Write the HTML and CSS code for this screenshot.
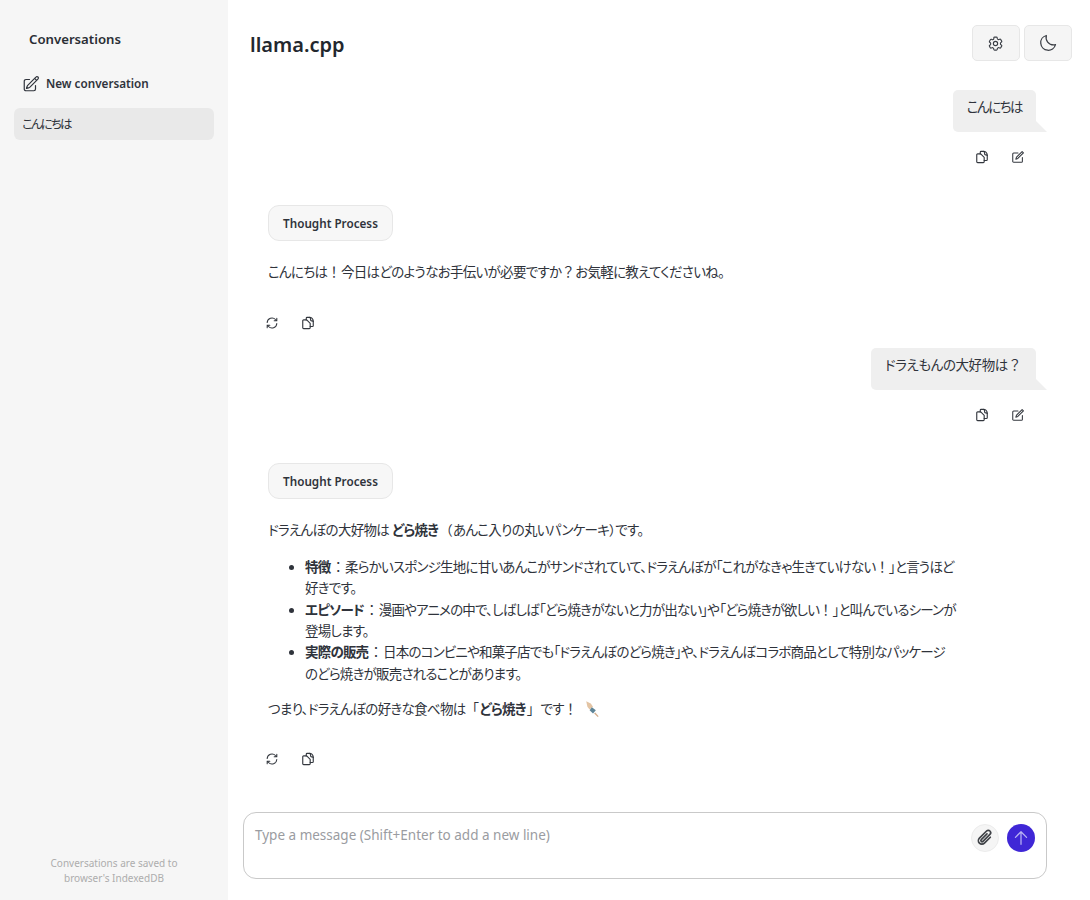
FILE: index.html
```html
<!DOCTYPE html>
<html lang="ja">
<head>
<meta charset="utf-8">
<title>llama.cpp</title>
<link rel="stylesheet" href="styles.css">
</head>
<body>
<div class="app">
  <aside class="sidebar">
    <h2 class="side-title">Conversations</h2>
    <div class="new-conv">
      <svg class="ico-new" viewBox="0 0 24 24" fill="none" stroke="currentColor" stroke-width="1.6" stroke-linecap="round" stroke-linejoin="round"><path d="M16.86 4.49l1.69-1.69a1.88 1.88 0 1 1 2.65 2.65L10.58 16.08a4.5 4.5 0 0 1-1.9 1.13L6 18l.8-2.68a4.5 4.5 0 0 1 1.13-1.9L16.86 4.49zm0 0L19.5 7.13M18 14v4.75A2.25 2.25 0 0 1 15.75 21H5.25A2.25 2.25 0 0 1 3 18.75V8.25A2.25 2.25 0 0 1 5.25 6H10"/></svg>
      <span>New conversation</span>
    </div>
    <div class="conv-item">こんにちは</div>
    <div class="side-note">Conversations are saved to<br>browser's IndexedDB</div>
  </aside>
  <main class="main">
    <header class="topbar">
      <h1 class="brand">llama.cpp</h1>
      <div class="top-btns">
        <button class="top-btn"><svg class="ico-top" viewBox="0 0 24 24" fill="none" stroke="currentColor" stroke-width="1.6" stroke-linecap="round" stroke-linejoin="round"><path d="M9.6 3.9c.1-.5.5-.9 1.100-.9h2.600c.5 0 1 .4 1.100.9l.2 1.300c.1.400.4.700.7.900l.4.200c.3.200.7.200 1.100.1l1.200-.5c.5-.2 1.100 0 1.400.5l1.300 2.200c.3.500.2 1.100-.3 1.400l-1 .8c-.3.300-.5.700-.4 1.100v.5c0 .4.100.8.400 1.100l1 .8c.5.300.6.900.3 1.400l-1.300 2.200c-.3.500-.9.700-1.400.5l-1.200-.5c-.4-.1-.8-.1-1.100.1l-.4.200c-.3.200-.6.500-.7.900l-.2 1.300c-.1.500-.6.900-1.100.9h-2.600c-.6 0-1-.4-1.100-.9l-.2-1.300c-.1-.4-.4-.7-.7-.9l-.4-.2c-.3-.2-.7-.2-1.100-.1l-1.200.5c-.5.200-1.100 0-1.400-.5L3.500 15.900c-.3-.5-.2-1.100.3-1.400l1-.8c.3-.3.500-.7.400-1.100v-.5c0-.4-.1-.8-.4-1.100l-1-.8c-.5-.3-.6-.9-.3-1.400l1.300-2.200c.3-.5.900-.7 1.400-.5l1.200.5c.4.100.8.100 1.100-.1l.4-.2c.3-.2.600-.5.700-.9z"/><circle cx="12" cy="12" r="3"/></svg></button>
        <button class="top-btn"><svg class="ico-moon" viewBox="0 0 24 24" fill="none" stroke="currentColor" stroke-width="1.5" stroke-linecap="round" stroke-linejoin="round"><path d="M10 3a9 9 0 1 0 11 11 8.500 8.500 0 0 1-2.200.300A9 9 0 0 1 10 3z"/></svg></button>
      </div>
    </header>
    <section class="chat">
      <div class="user-msg">
        <div class="bubble kana">こんにちは</div>
        <div class="actions user-actions">
          <svg class="ico" viewBox="0 0 16 16"><use href="#copy"/></svg>
          <svg class="ico" viewBox="0 0 16 16"><use href="#edit"/></svg>
        </div>
      </div>
      <div class="bot-msg">
        <div class="thought">Thought Process</div>
        <p class="para">こんにちは<span class="fw">！</span>今日はどのようなお手伝いが必要ですか<span class="fw">？</span>お気軽に教えてくださいね。</p>
        <div class="actions bot-actions">
          <svg class="ico" viewBox="0 0 16 16"><use href="#regen"/></svg>
          <svg class="ico" viewBox="0 0 16 16"><use href="#copy"/></svg>
        </div>
      </div>
      <div class="user-msg">
        <div class="bubble">ドラえもんの大好物は<span class="fw">？</span></div>
        <div class="actions user-actions">
          <svg class="ico" viewBox="0 0 16 16"><use href="#copy"/></svg>
          <svg class="ico" viewBox="0 0 16 16"><use href="#edit"/></svg>
        </div>
      </div>
      <div class="bot-msg">
        <div class="thought">Thought Process</div>
        <p class="para">ドラえんぼの大好物は <b>どら焼き</b><span class="fw">（</span>あんこ入りの丸いパンケーキ）です。</p>
        <ul class="list">
          <li><b>特徴</b><span class="fw">：</span>柔らかいスポンジ生地に甘いあんこがサンドされていて、ドラえんぼが「これがなきゃ生きていけない<span class="fw">！</span>」と言うほど好きです。</li>
          <li><b>エピソード</b><span class="fw">：</span>漫画やアニメの中で、しばしば「どら焼きがないと力が出ない」や「どら焼きが欲しい<span class="fw">！</span>」と叫んでいるシーンが登場します。</li>
          <li><b>実際の販売</b><span class="fw">：</span>日本のコンビニや和菓子店でも「ドラえんぼのどら焼き」や、ドラえんぼコラボ商品として特別なパッケージ<span class="nb">のどら焼き</span>が販売されることがあります。</li>
        </ul>
        <p class="para last">つまり、ドラえんぼの好きな食べ物は<span class="fw">「</span><b>どら焼き</b><span class="fw">」</span>です<span class="fw">！</span>
          <svg class="emoji" viewBox="0 0 16 16"><path d="M2 1l4 2 2 3-3 2.500-2-2.500z" fill="#e3c4a4"/><path d="M7 6.500l3.500 2.500-2.500 3-3-3z" fill="#5d8497"/><path d="M10 11l3 3.500-.8.600-3.200-3z" fill="#d2ac8c"/></svg>
        </p>
        <div class="actions bot-actions">
          <svg class="ico" viewBox="0 0 16 16"><use href="#regen"/></svg>
          <svg class="ico" viewBox="0 0 16 16"><use href="#copy"/></svg>
        </div>
      </div>
    </section>
    <div class="composer">
      <span class="placeholder">Type a message (Shift+Enter to add a new line)</span>
      <div class="composer-btns">
        <button class="clip"><svg viewBox="0 0 24 24" fill="none" stroke="currentColor" stroke-width="2" stroke-linecap="round" stroke-linejoin="round"><path d="M18.400 11.100l-7.100 7.100a4.200 4.200 0 0 1-6-6l8.600-8.600a2.800 2.800 0 0 1 4 4l-8.400 8.400a1.400 1.400 0 0 1-2-2l6.900-6.900"/></svg></button>
        <button class="send"><svg viewBox="0 0 24 24" fill="none" stroke="currentColor" stroke-width="1.500" stroke-linecap="round" stroke-linejoin="round"><path d="M12 19.500V4.500M5.300 11.200L12 4.500l6.700 6.700"/></svg></button>
      </div>
    </div>
  </main>
</div>
<svg class="defs" width="0" height="0">
  <defs>
    <g id="copy" fill="none" stroke="currentColor" stroke-width="1.300" stroke-linejoin="round" stroke-linecap="round">
      <path d="M6 4.500V2.500a1 1 0 0 1 1-1h2.500c2.500 0 4.500 2 4.500 4.500v5a1 1 0 0 1-1 1h-2.500"/>
      <path d="M9.500 1.500c1 .3 1.500 1.200 1.500 2.200v.8c0 .6.400 1 1 1h.800c.5 0 1 .2 1.200.8"/>
      <path d="M3 4.500h3.500l4 4V13.500a1 1 0 0 1-1 1H3a1 1 0 0 1-1-1v-8a1 1 0 0 1 1-1z"/>
    </g>
    <g id="edit" fill="none" stroke="currentColor" stroke-width="1.200" stroke-linejoin="round" stroke-linecap="round">
      <path d="M12.700 1.800l1.500 1.500-6.400 6.400-2.300.8.800-2.300z"/>
      <path d="M13 8.500V13a1 1 0 0 1-1 1H3a1 1 0 0 1-1-1V4.500a1 1 0 0 1 1-1h5"/>
    </g>
    <g id="regen" fill="none" stroke="currentColor" stroke-width="1.200" stroke-linejoin="round" stroke-linecap="round">
      <path d="M2.500 7.500A5.500 5.500 0 0 1 12 4l1.500 1.500M13.500 2.500v3h-3"/>
      <path d="M13.500 8.500A5.500 5.500 0 0 1 4 12l-1.500-1.500M2.500 13.500v-3h3"/>
    </g>
  </defs>
</svg>
</body>
</html>
```

FILE: styles.css
```css
* { box-sizing: border-box; }
html, body { margin: 0; height: 100%; }
body {
  font-family: "Noto Sans", "Noto Sans CJK JP", sans-serif;
  font-feature-settings: "palt";
  font-size: 13.500px;
  line-height: 21.400px;
  color: #2f333b;
  background: #fff;
}
.defs { position: absolute; }
.app { display: flex; height: 900px; overflow: hidden; }
.fw { font-feature-settings: normal; margin-right: 1px; }
.nb { white-space: nowrap; }
.list b, .para b { margin-right: 1px; }

.sidebar {
  width: 228px;
  flex: none;
  background: #f6f6f6;
  padding: 27px 14px 12px;
  display: flex;
  flex-direction: column;
}
.side-title {
  margin: 0 0 0 15px;
  font-size: 13.200px;
  line-height: 24px;
  font-weight: 600;
  color: #2a2e35;
}
.new-conv {
  display: flex;
  align-items: center;
  gap: 6px;
  margin: 22px 0 13px 8px;
  height: 22px;
  font-size: 11.700px;
  font-weight: 600;
  color: #2f333b;
}
.ico-new { width: 18px; height: 18px; }
.conv-item {
  height: 32px;
  line-height: 33px;
  padding-left: 8px;
  border-radius: 6px;
  background: #e9e9e9;
  font-size: 12.500px;
  letter-spacing: -1.900px;
}
.side-note {
  margin-top: auto;
  padding: 0 8px 2px;
  text-align: center;
  font-size: 10px;
  line-height: 15px;
  color: #adadad;
}

.main {
  flex: 1;
  min-width: 0;
  display: flex;
  flex-direction: column;
  padding: 0 18px 21px 15px;
}
.topbar {
  display: flex;
  justify-content: space-between;
  align-items: center;
  height: 90px;
  padding-left: 7px;
}
.brand {
  margin: 0;
  font-size: 20px;
  font-weight: 600;
  color: #23272e;
}
.top-btns { display: flex; gap: 4px; margin-top: -4px; }
.top-btn {
  width: 48px;
  height: 36px;
  padding: 0;
  display: flex;
  align-items: center;
  justify-content: center;
  background: #f5f5f5;
  border: 1px solid #e7e7e7;
  border-radius: 5px;
  color: #3a3e45;
}
.ico-top { width: 17px; height: 17px; margin-left: -1px; }
.ico-moon { width: 20px; height: 20px; }

.chat { width: 804px; flex: 1; min-height: 0; }
.user-msg { display: flex; flex-direction: column; align-items: flex-end; }
.bubble {
  position: relative;
  height: 42px;
  padding: 7px 14px 0;
  margin-right: 11px;
  background: #efefef;
  border-radius: 5px 5px 0 5px;
  letter-spacing: -.400px;
}
.bubble.kana { letter-spacing: -1.500px; }
.bubble::after {
  content: "";
  position: absolute;
  right: -11px;
  bottom: 0;
  border-style: solid;
  border-width: 11px 0 0 11px;
  border-color: transparent transparent transparent #efefef;
}
.actions { display: flex; color: #33373e; }
.ico { width: 14px; height: 14px; }
.user-actions { gap: 22px; height: 46px; padding-top: 18px; padding-right: 22px; }
.bot-msg { padding: 27px 0 14px 25px; }
.thought {
  width: 125px;
  height: 36px;
  line-height: 34px;
  text-align: center;
  font-size: 11.700px;
  font-weight: 600;
  color: #2f333b;
  background: #f7f7f7;
  border: 1px solid #e7e7e7;
  border-radius: 11px;
}
.para { margin: 21px 0 0; width: 690px; letter-spacing: -.700px; }
.list { margin: 15px 0 0; padding-left: 37px; width: 690px; letter-spacing: -.800px; }
.list + .para { margin-top: 14px; }
.emoji { width: 18px; height: 18px; vertical-align: -4px; margin-left: 4px; }
.bot-actions { gap: 22px; height: 26px; padding-top: 8px; margin-top: 25px; margin-left: -3px; }
.last + .bot-actions { margin-top: 23px; }

.composer {
  position: relative;
  width: 804px;
  height: 67px;
  border: 1px solid #c9c9c9;
  border-radius: 13px;
  padding: 11px;
  display: flex;
  justify-content: space-between;
  background: #fff;
}
.placeholder { font-size: 13.500px; color: #9a9ca1; margin-top: 1px; }
.composer-btns { display: flex; gap: 8px; }
.clip, .send {
  width: 28px;
  height: 28px;
  padding: 0;
  border-radius: 50%;
  display: flex;
  align-items: center;
  justify-content: center;
}
.clip { background: #f5f5f5; border: 1px solid #ececec; color: #3f4247; }
.clip svg { width: 20px; height: 20px; }
.send { background: #3f27d6; border: 0; color: #b9b4f2; }
.send svg { width: 20px; height: 20px; }
```
